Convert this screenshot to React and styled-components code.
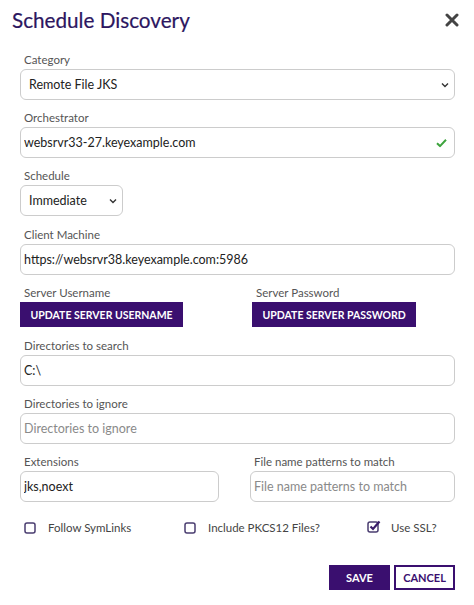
import React from 'react';
import styled, { createGlobalStyle } from 'styled-components';

const Global = createGlobalStyle`
  html, body { margin: 0; padding: 0; background: #fff; }
  body { font-family: Lato, "Open Sans", sans-serif; }
  * { box-sizing: border-box; }
`;

const PURPLE = '#3a0f6f';

const Dialog = styled.div`
  width: 474px;
  height: 605px;
  background: #fff;
  padding: 0 19px 0 20px;
  display: flex;
  flex-direction: column;
`;

const Header = styled.header`
  display: flex;
  align-items: center;
  justify-content: space-between;
  margin: 0 -19px 0 -20px;
  padding: 6px 15px 0 12px;
`;

const Title = styled.h1`
  margin: 0;
  font-size: 20.7px;
  line-height: 28px;
  font-weight: 400;
  color: #2c1660;
  -webkit-text-stroke: 0.2px #2c1660;
`;

const Close = styled.button`
  border: 0;
  background: none;
  padding: 0;
  width: 14px;
  height: 14px;
  display: flex;
  cursor: pointer;
`;

const Form = styled.div`
  margin-top: 19px;
  display: flex;
  flex-direction: column;
  gap: 11px;
`;

const Field = styled.div`
  display: flex;
  flex-direction: column;
  gap: 2px;
  margin-top: ${p => p.$mt || 0}px;
`;

const Label = styled.label`
  font-size: 11.5px;
  line-height: 14px;
  color: #555;
  padding-left: 4px;
`;

const Box = styled.div`
  position: relative;
  width: ${p => p.$w || '100%'};
`;

const TextInput = styled.input`
  width: 100%;
  height: 31px;
  border: 1px solid #cccccc;
  border-radius: 6px;
  padding: 0 ${p => p.$pr || 4}px 0 3px;
  font-family: inherit;
  font-size: 12.5px;
  color: #222;
  background: #fff;
  outline: none;
  &::placeholder { color: #8a8a8a; }
`;

const Select = styled.select`
  appearance: none;
  width: 100%;
  height: 31px;
  border: 1px solid #cccccc;
  border-radius: 6px;
  padding: 0 20px 0 8px;
  font-family: inherit;
  font-size: 12.5px;
  color: #222;
  background: #fff;
  outline: none;
`;

const Adorn = styled.span`
  position: absolute;
  right: ${p => p.$r}px;
  top: 50%;
  transform: translateY(-50%);
  display: flex;
  pointer-events: none;
`;

const TwoCol = styled.div`
  display: grid;
  grid-template-columns: ${p => p.$cols};
  margin-top: ${p => p.$mt || 0}px;
`;

const ActionButton = styled.button`
  height: 25px;
  border: 0;
  background: ${PURPLE};
  color: #fff;
  font-family: inherit;
  font-size: 10.5px;
  font-weight: 700;
  padding: 0 10.5px;
  align-self: flex-start;
  cursor: pointer;
`;

const Checks = styled.div`
  margin-top: 18px;
  display: grid;
  grid-template-columns: 160px 183px 1fr;
  padding-left: 4px;
  height: 14px;
  align-items: center;
`;

const CheckItem = styled.label`
  display: flex;
  align-items: center;
  gap: 10px;
  font-size: 11.5px;
  color: #444;
`;

const Footer = styled.div`
  margin-top: 31px;
  display: flex;
  justify-content: flex-end;
  gap: 4px;
`;

const FooterButton = styled.button`
  width: 61px;
  height: 25px;
  font-family: inherit;
  font-size: 11px;
  font-weight: 700;
  cursor: pointer;
  background: ${p => (p.$primary ? PURPLE : '#fff')};
  color: ${p => (p.$primary ? '#fff' : PURPLE)};
  border: ${p => (p.$primary ? '0' : `2px solid ${PURPLE}`)};
`;

const Chevron = () => (
  <svg width="8" height="6" viewBox="0 0 8 6">
    <path d="M1 1.5 L4 4.5 L7 1.5" fill="none" stroke="#333" strokeWidth="1.4" />
  </svg>
);

const GreenCheck = () => (
  <svg width="11" height="9" viewBox="0 0 11 9">
    <path d="M1 4.8 L4 7.6 L10 1.2" fill="none" stroke="#3ea43e" strokeWidth="2" />
  </svg>
);

const CheckBox = ({ checked }) => (
  <svg width="14" height="13" viewBox="0 0 14 13" style={{ marginTop: checked ? -2 : 0 }}>
    <rect x="1" y="2" width="10" height="10" rx="2" fill="none" stroke="#4a3d70" strokeWidth="1.5" />
    {checked && (
      <path d="M3.5 6.5 L6 9 L12.5 1.5" fill="none" stroke="#3a1d6a" strokeWidth="2.2" />
    )}
  </svg>
);

export default function App() {
  return (
    <Dialog>
      <Global />
      <Header>
        <Title>Schedule Discovery</Title>
        <Close aria-label="Close">
          <svg width="14" height="14" viewBox="0 0 14 14">
            <path d="M2 2 L12 12 M12 2 L2 12" stroke="#444" strokeWidth="3" strokeLinecap="round" />
          </svg>
        </Close>
      </Header>
      <Form>
        <Field>
          <Label>Category</Label>
          <Box>
            <Select defaultValue="jks">
              <option value="jks">Remote File JKS</option>
            </Select>
            <Adorn $r={6}><Chevron /></Adorn>
          </Box>
        </Field>
        <Field>
          <Label>Orchestrator</Label>
          <Box>
            <TextInput $pr={24} defaultValue="websrvr33-27.keyexample.com" />
            <Adorn $r={8}><GreenCheck /></Adorn>
          </Box>
        </Field>
        <Field>
          <Label>Schedule</Label>
          <Box $w="103px">
            <Select defaultValue="imm">
              <option value="imm">Immediate</option>
            </Select>
            <Adorn $r={6}><Chevron /></Adorn>
          </Box>
        </Field>
        <Field $mt={1}>
          <Label>Client Machine</Label>
          <TextInput defaultValue="https://websrvr38.keyexample.com:5986" />
        </Field>
        <TwoCol $cols="232px 1fr">
          <Field>
            <Label>Server Username</Label>
            <ActionButton>UPDATE SERVER USERNAME</ActionButton>
          </Field>
          <Field>
            <Label>Server Password</Label>
            <ActionButton>UPDATE SERVER PASSWORD</ActionButton>
          </Field>
        </TwoCol>
        <Field $mt={1}>
          <Label>Directories to search</Label>
          <TextInput defaultValue="C:\" />
        </Field>
        <Field>
          <Label>Directories to ignore</Label>
          <TextInput placeholder="Directories to ignore" />
        </Field>
        <TwoCol $cols="230px 1fr">
          <Field>
            <Label>Extensions</Label>
            <Box $w="199px">
              <TextInput defaultValue="jks,noext" />
            </Box>
          </Field>
          <Field>
            <Label>File name patterns to match</Label>
            <TextInput placeholder="File name patterns to match" />
          </Field>
        </TwoCol>
      </Form>
      <Checks>
        <CheckItem><CheckBox />Follow SymLinks</CheckItem>
        <CheckItem><CheckBox />Include PKCS12 Files?</CheckItem>
        <CheckItem><CheckBox checked />Use SSL?</CheckItem>
      </Checks>
      <Footer>
        <FooterButton $primary>SAVE</FooterButton>
        <FooterButton>CANCEL</FooterButton>
      </Footer>
    </Dialog>
  );
}
